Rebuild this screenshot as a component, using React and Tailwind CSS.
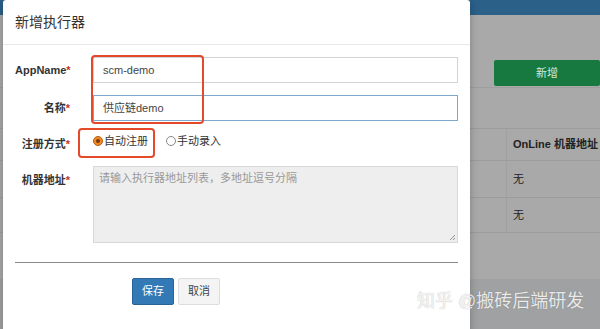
import React from "react";

const font = { fontFamily: '"Liberation Sans", "Noto Sans CJK SC", sans-serif' };

function Label({ children }) {
  return (
    <label className="block text-right text-[11px] font-bold leading-[14px] text-[#333]">
      {children}
      <span className="text-[#c9302c]">*</span>
    </label>
  );
}

function Radio({ checked, children }) {
  return (
    <span className="flex items-center text-[11px] leading-[14px] text-[#333]">
      {checked ? (
        <span className="mr-[1px] flex h-[10px] w-[10px] items-center justify-center rounded-full border border-[#b85a12] bg-[#f08a24]">
          <span className="h-[4px] w-[4px] rounded-full bg-[#7a3a08]" />
        </span>
      ) : (
        <span className="mr-[1px] h-[10px] w-[10px] rounded-full border border-[#888] bg-white" />
      )}
      {children}
    </span>
  );
}

function Background() {
  return (
    <div className="flex h-full flex-col bg-[#a9a9a9]">
      <div className="h-[15px] shrink-0 bg-[#2b6088]" />
      <div className="flex h-[73px] shrink-0 items-end border-b border-[#9e9e9e] pb-[1px] pl-[494px]">
        <button className="flex h-[26px] w-[120px] items-center justify-center rounded-[2px] bg-[#17793f] text-[11px] text-[#d8e8dc]">
          新增
        </button>
      </div>
      <div className="h-[40px] shrink-0" />
      <div className="flex flex-col">
        <div className="flex h-[32px] items-center border-t border-[#9c9c9c]">
          <div className="h-full w-[507px] border-r border-[#a1a1a1]" />
          <span className="pl-[6px] text-[11px] font-bold text-[#222]">OnLine 机器地址</span>
        </div>
        <div className="flex h-[37px] items-center border-t border-[#9c9c9c]">
          <div className="h-full w-[507px] border-r border-[#a1a1a1]" />
          <span className="pl-[6px] text-[11px] text-[#222]">无</span>
        </div>
        <div className="flex h-[36px] items-center border-t border-b border-[#9c9c9c]">
          <div className="h-full w-[507px] border-r border-[#a1a1a1]" />
          <span className="pl-[6px] text-[11px] text-[#222]">无</span>
        </div>
      </div>
      <div className="h-[46px] shrink-0" />
      <div className="flex-1 bg-[#a0a1a3]" />
    </div>
  );
}

function Modal() {
  return (
    <div className="absolute left-[3px] top-0 h-[345px] w-[467px] rounded-[3px] bg-white shadow-[0_2px_8px_rgba(0,0,0,0.25)]">
      <div className="flex h-[45px] items-center border-b border-[#e8e8e8] px-[12px]">
        <h4 className="text-[14px] leading-[18px] text-[#333]">新增执行器</h4>
      </div>

      <div className="px-[12px] pt-[12px]">
        <div className="grid grid-cols-[55px_1fr] items-center gap-x-[23px]">
          <Label>AppName</Label>
          <div className="flex h-[26px] items-center border border-[#d4d4d4] px-[9px] text-[11px] text-[#444]">
            scm-demo
          </div>
        </div>

        <div className="mt-[12px] grid grid-cols-[55px_1fr] items-center gap-x-[23px]">
          <Label>名称</Label>
          <div className="flex h-[26px] items-center border border-[#7fa9cc] px-[9px] text-[11px] text-[#444]">
            供应链demo
          </div>
        </div>

        <div className="mt-[9px] grid h-[22px] grid-cols-[55px_1fr] items-center gap-x-[23px]">
          <div className="pt-[6px]">
            <Label>注册方式</Label>
          </div>
          <div className="flex h-[22px] items-center gap-[18px]">
            <Radio checked>自动注册</Radio>
            <Radio>手动录入</Radio>
          </div>
        </div>

        <div className="mt-[14px] grid grid-cols-[55px_1fr] items-start gap-x-[23px]">
          <div className="pt-[7px]">
            <Label>机器地址</Label>
          </div>
          <div className="relative h-[77px] border border-[#d8d8d8] bg-[#eeeeee] px-[5px] pt-[4px] text-[11px] leading-[14px] text-[#999]">
            请输入执行器地址列表，多地址逗号分隔
            <svg className="absolute bottom-[1px] right-[1px]" width="8" height="8" viewBox="0 0 8 8">
              <path d="M7 2 L2 7 M7 5 L5 7" stroke="#888" strokeWidth="0.9" />
            </svg>
          </div>
        </div>

        <div className="mt-[19px] border-t border-[#8a8a8a]" />

        <div className="flex gap-[4px] pl-[117px] pt-[15px]">
          <button className="flex h-[27px] w-[42px] items-center justify-center rounded-[2px] border border-[#2a6496] bg-[#3279b5] text-[11px] text-white">
            保存
          </button>
          <button className="flex h-[27px] w-[42px] items-center justify-center rounded-[2px] border border-[#ddd] bg-[#f4f4f4] text-[11px] text-[#444]">
            取消
          </button>
        </div>
      </div>
    </div>
  );
}

export default function App() {
  return (
    <div className="relative h-[329px] w-[600px] overflow-hidden" style={font}>
      <Background />
      <Modal />
      {/* annotation boxes drawn over the form */}
      <div className="absolute left-[91px] top-[55px] h-[69px] w-[113px] rounded-[4px] border-2 border-[#e4492a]" />
      <div className="absolute left-[78px] top-[128px] h-[30px] w-[77px] rounded-[4px] border-2 border-[#e4492a]" />
      <div className="absolute left-[417px] top-[289px] text-[18px] leading-[24px] text-white/85 [text-shadow:0_0_1px_rgba(0,0,0,0.35)]">
        知乎 @搬砖后端研发
      </div>
    </div>
  );
}
